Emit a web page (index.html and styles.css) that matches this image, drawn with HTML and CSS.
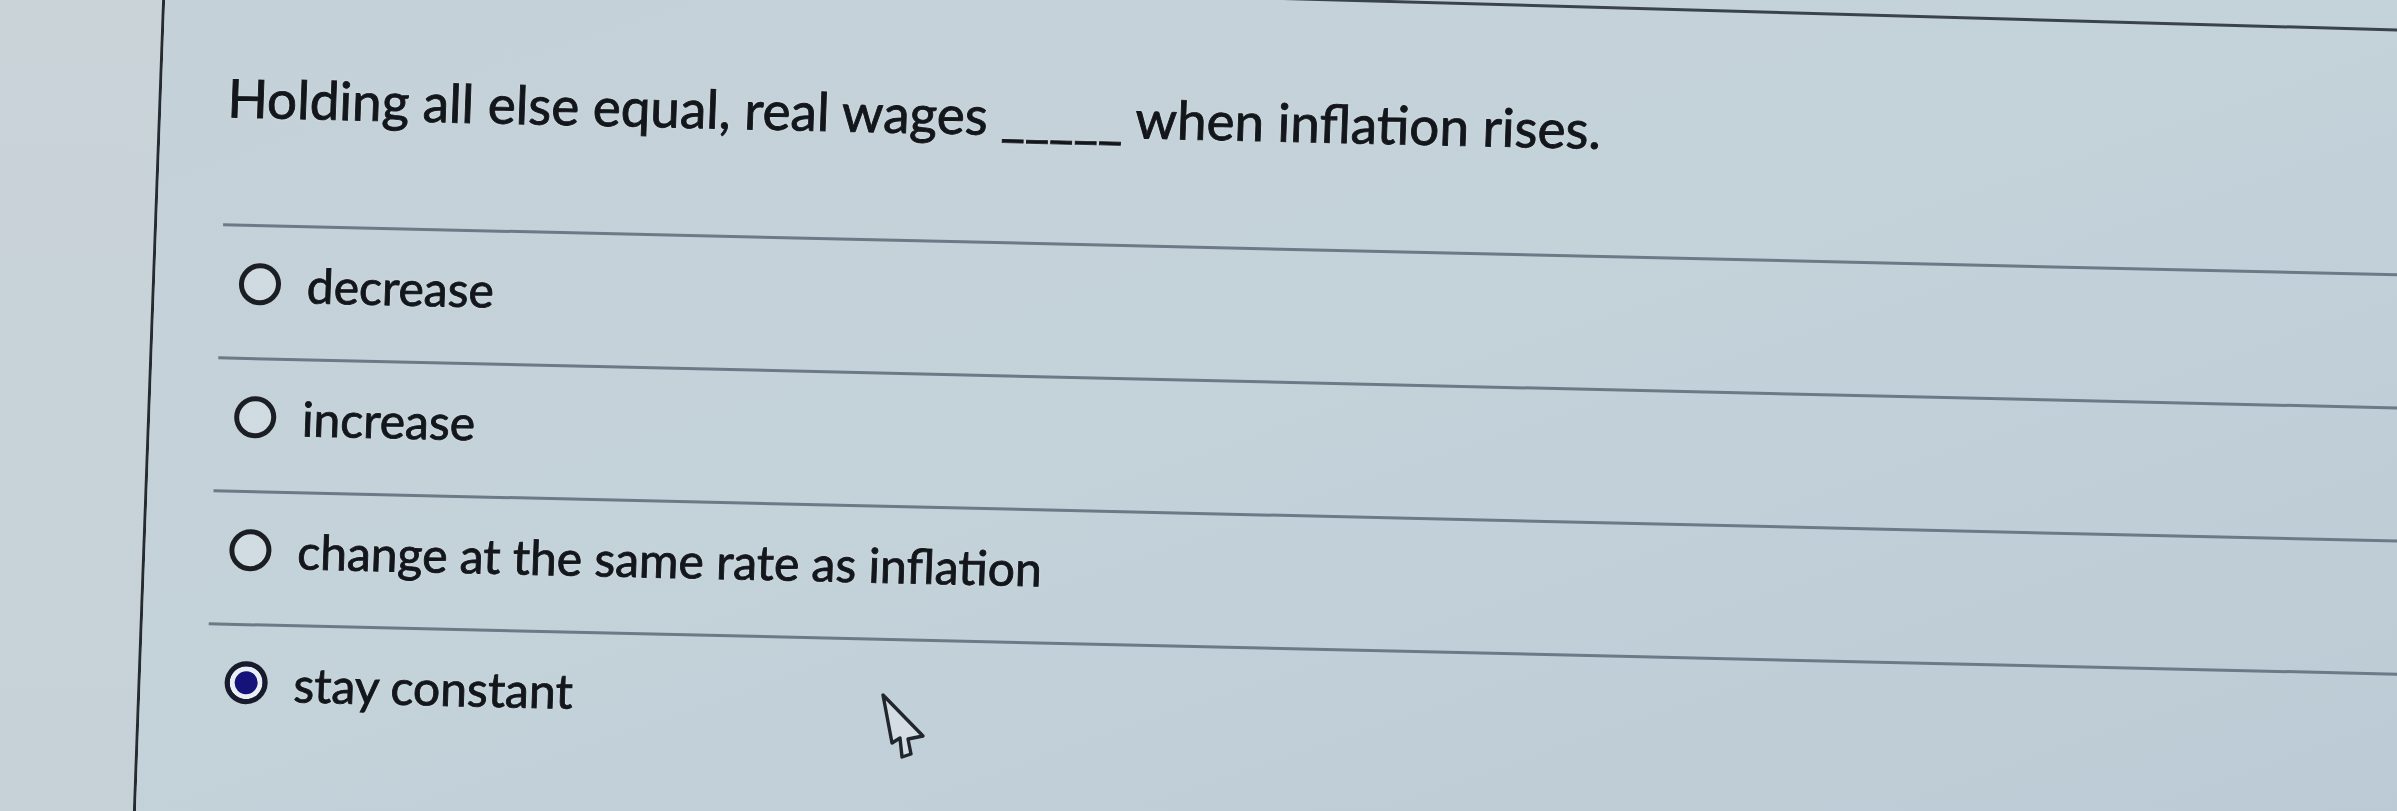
FILE: index.html
```html
<!DOCTYPE html>
<html lang="en">
<head>
<meta charset="utf-8">
<title>Quiz question</title>
<link rel="stylesheet" href="styles.css">
</head>
<body>
<div class="screen">
  <aside class="gutter"></aside>
  <main class="content">
    <div class="topbar"></div>
    <p class="question">Holding all else equal, real wages _____ when inflation rises.</p>
    <ul class="answers">
      <li class="answer"><span class="radio"></span><span class="label">decrease</span></li>
      <li class="answer"><span class="radio"></span><span class="label">increase</span></li>
      <li class="answer"><span class="radio"></span><span class="label">change at the same rate as inflation</span></li>
      <li class="answer"><span class="radio checked"></span><span class="label">stay constant</span></li>
    </ul>
  </main>
</div>
<svg class="cursor" width="62" height="82" viewBox="0 0 62 82" aria-hidden="true">
  <path d="M3 3 L12 51 L20 46 L22 65 L31 62 L28 47 L43 44 Z" fill="#d3dde3" stroke="#20262c" stroke-width="3.4" stroke-linejoin="round"/>
</svg>
</body>
</html>
```
FILE: styles.css
```css
html, body {
  margin: 0;
  padding: 0;
  width: 2397px;
  height: 811px;
  overflow: hidden;
  background: #c9d3d8;
}

.screen {
  display: flex;
  width: 2520px;
  height: 1000px;
  margin-top: -100px;
  transform-origin: 0 100px;
  transform: matrix(1, 0.023, -0.036, 1, 0, 0);
}

.gutter {
  flex: 0 0 162px;
  background: linear-gradient(180deg, #c9d3d8 0%, #c8d3d9 60%, #c6d1d7 100%);
  border-right: 3px solid #262b30;
}

.content {
  flex: 1 1 auto;
  padding-left: 66px;
  background: linear-gradient(160deg, #c5d1d8 0%, #c4d2da 45%, #bfcdd7 75%, #bbc9d4 100%);
  font-family: Lato, "Open Sans", sans-serif;
  color: #13171b;
  -webkit-text-stroke: 0.9px #13171b;
  text-shadow: 0 0 3px rgba(240, 246, 250, 0.6);
}

.topbar {
  height: 74px;
  border-bottom: 3px solid #3a434c;
  transform-origin: right bottom;
  transform: rotate(0.3deg);
}

.question {
  margin: 0;
  padding: 83px 0 94px 0;
  font-size: 53px;
  line-height: 1.2;
}

.answers {
  list-style: none;
  margin: 0;
  padding: 0;
}

.answer {
  display: flex;
  align-items: center;
  height: 114px;
  padding-bottom: 16px;
  border-top: 3px solid #6c7986;
  font-size: 48px;
  line-height: 1.2;
}

.radio {
  flex: 0 0 auto;
  width: 32px;
  height: 32px;
  margin-left: 18px;
  margin-right: 26px;
  border: 5px solid #1b1f24;
  border-radius: 50%;
  background: rgba(235, 242, 246, 0.3);
}

.radio.checked {
  width: 33px;
  height: 33px;
  border-color: #171b2a;
  background: #15137a;
  box-shadow: inset 0 0 0 5px #e9eff3;
}

.cursor {
  position: absolute;
  left: 880px;
  top: 692px;
}
```
